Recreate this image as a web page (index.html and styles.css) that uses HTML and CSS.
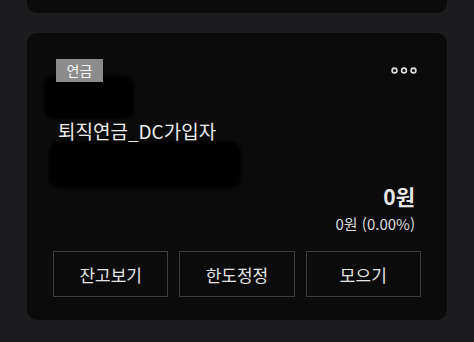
FILE: index.html
```html
<!DOCTYPE html>
<html lang="ko">
<head>
    <meta charset="UTF-8">
    <meta name="viewport" content="width=device-width, initial-scale=1.0">
    <title>퇴직연금</title>
    <link rel="stylesheet" href="styles.css">
</head>
<body>

    <div class="card card-prev"></div>

    <div class="card">
        <div class="card-head">
            <span class="badge">연금</span>
            <button class="more-btn" aria-label="더보기">
                <svg width="26" height="7" viewBox="0 0 26 7">
                    <circle cx="3.5" cy="3.5" r="2.4" fill="none" stroke="#dedede" stroke-width="1.6"/>
                    <circle cx="13" cy="3.5" r="2.4" fill="none" stroke="#dedede" stroke-width="1.6"/>
                    <circle cx="22.5" cy="3.5" r="2.4" fill="none" stroke="#dedede" stroke-width="1.6"/>
                </svg>
            </button>
        </div>
        <div class="redact redact-small"></div>
        <div class="account-name">퇴직연금_DC가입자</div>
        <div class="redact redact-wide"></div>
        <div class="amount">0원</div>
        <div class="amount-sub">0원 (0.00%)</div>
        <div class="actions">
            <button class="action-btn">잔고보기</button>
            <button class="action-btn">한도정정</button>
            <button class="action-btn">모으기</button>
        </div>
    </div>

</body>
</html>
```

FILE: styles.css
```css
body {
    margin: 0;
    background-color: #1c1c1e;
    font-family: "Noto Sans CJK KR", "Noto Sans", sans-serif;
    color: #e8e8e8;
    height: 342px;
    overflow: hidden;
}

.card {
    margin: 0 27px;
    background-color: #0b0b0b;
    border-radius: 10px;
    padding: 26px 26px 23px;
    box-sizing: border-box;
    height: 287px;
}

/* bottom of the card above, cut off by the window */
.card-prev {
    height: 13px;
    padding: 0;
    border-radius: 0 0 10px 10px;
    margin-bottom: 20px;
}

.card-head {
    display: flex;
    justify-content: space-between;
    align-items: center;
    height: 23px;
}

.badge {
    display: inline-block;
    margin-left: 3px;
    width: 47px;
    height: 23px;
    line-height: 23px;
    background-color: #8c8c8c;
    color: #f4f4f4;
    font-size: 14px;
    text-align: center;
}

.more-btn {
    background: none;
    border: none;
    padding: 0;
    margin-right: 4px;
    display: flex;
    cursor: pointer;
}

/* blacked-out account number */
.redact {
    background-color: #000;
    border-radius: 8px;
    box-shadow: 0 0 3px 2px #000;
}

.redact-small {
    width: 86px;
    height: 39px;
    margin: -4px 0 2px -7px;
}

.account-name {
    font-size: 19px;
    line-height: 24px;
    margin-left: 5px;
    color: #ececec;
}

.redact-wide {
    width: 188px;
    height: 42px;
    margin: 1px 0 0 -2px;
}

.amount {
    text-align: right;
    font-size: 21px;
    font-weight: bold;
    line-height: 26px;
    margin: -3px 6px 0 0;
}

.amount-sub {
    text-align: right;
    font-size: 15px;
    line-height: 20px;
    margin: 5px 6px 0 0;
    color: #dcdcdc;
}

.actions {
    display: grid;
    grid-template-columns: 1fr 1fr 1fr;
    gap: 11px;
    margin-top: 17px;
}

.action-btn {
    height: 46px;
    background-color: transparent;
    border: 1px solid #3c3c3c;
    color: #e4e4e4;
    font-family: inherit;
    font-size: 17px;
    cursor: pointer;
}
```
